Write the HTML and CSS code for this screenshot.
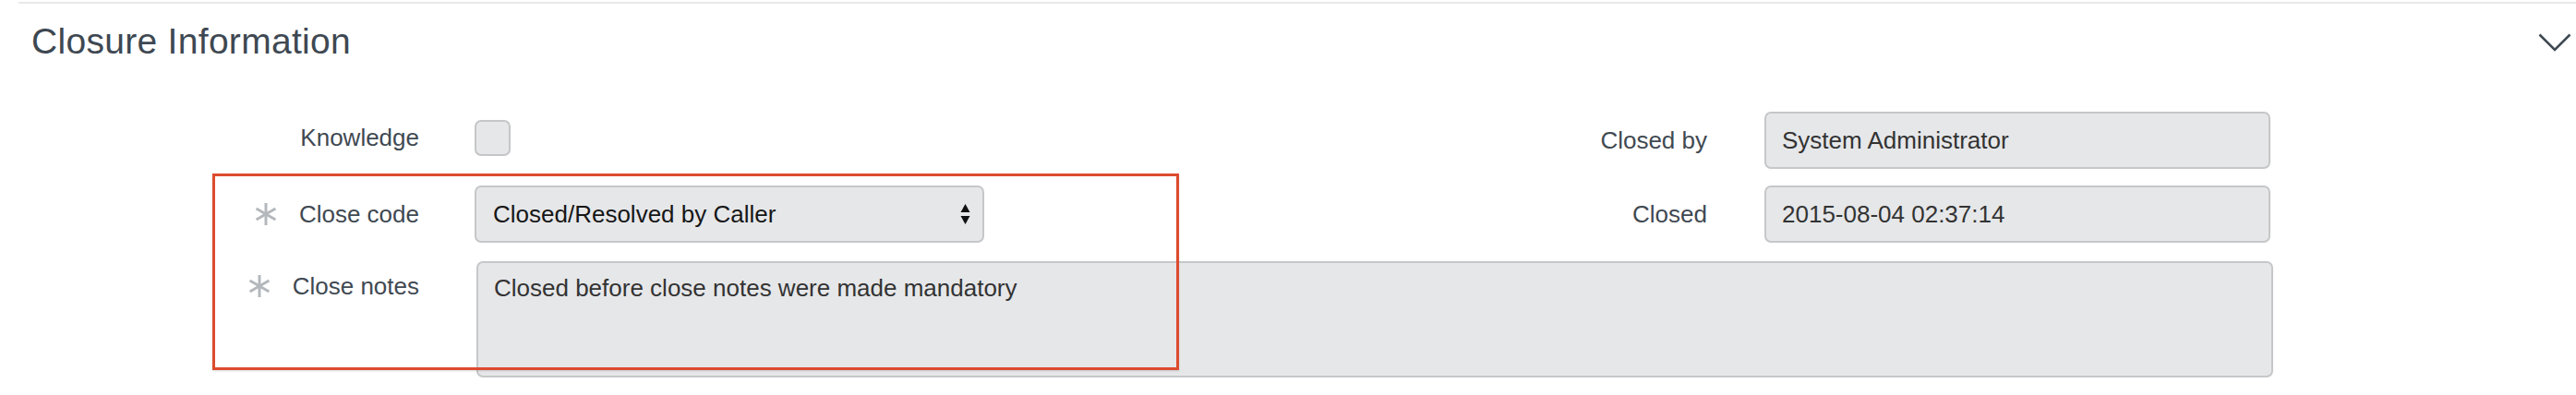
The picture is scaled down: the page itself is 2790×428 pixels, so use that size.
FILE: index.html
```html
<!DOCTYPE html>
<html lang="en">
<head>
<meta charset="utf-8">
<title>Closure Information</title>
<link rel="stylesheet" href="styles.css">
</head>
<body>
<div class="rule"></div>
<header class="section-head">
  <h2 class="section-title">Closure Information</h2>
  <svg class="chevron" width="36" height="20" viewBox="0 0 36 20" aria-hidden="true">
    <polyline points="1.5,1.5 18,18 34.5,1.5" fill="none" stroke="#3f4952" stroke-width="2.6" stroke-linejoin="miter"/>
  </svg>
</header>
<div class="form">
  <div class="form-grid">
    <label class="lbl lbl-knowledge">Knowledge</label>
    <div class="field"><span class="checkbox"></span></div>
    <label class="lbl lbl-right">Closed by</label>
    <div class="field"><div class="input">System Administrator</div></div>

    <label class="lbl"><svg class="req" width="26" height="26" viewBox="0 0 26 26" aria-hidden="true"><g stroke="#b4b8bc" stroke-width="3" stroke-linecap="butt"><line x1="13" y1="1" x2="13" y2="25"/><line x1="2.6" y1="7" x2="23.4" y2="19"/><line x1="2.6" y1="19" x2="23.4" y2="7"/></g></svg>Close code</label>
    <div class="field">
      <div class="select"><span class="select-text">Closed/Resolved by Caller</span>
        <svg class="updown" width="11" height="22" viewBox="0 0 11 22" aria-hidden="true"><polygon points="5.5,0 10.5,9 0.5,9" fill="#111"/><polygon points="0.5,13 10.5,13 5.5,22" fill="#111"/></svg>
      </div>
    </div>
    <label class="lbl lbl-right">Closed</label>
    <div class="field"><div class="input">2015-08-04 02:37:14</div></div>

    <label class="lbl lbl-top"><svg class="req" width="26" height="26" viewBox="0 0 26 26" aria-hidden="true"><g stroke="#b4b8bc" stroke-width="3" stroke-linecap="butt"><line x1="13" y1="1" x2="13" y2="25"/><line x1="2.6" y1="7" x2="23.4" y2="19"/><line x1="2.6" y1="19" x2="23.4" y2="7"/></g></svg>Close notes</label>
    <div class="textarea">Closed before close notes were made mandatory</div>
  </div>
  <div class="highlight"></div>
</div>
</body>
</html>
```

FILE: styles.css
```css
html, body {
  margin: 0;
  padding: 0;
  background: #ffffff;
}

body {
  font-family: "Liberation Sans", Arial, sans-serif;
  color: #3f4952;
  width: 2790px;
  overflow: hidden;
}

.rule {
  margin: 2px 0 0 20px;
  border-top: 2px solid #e8e9ea;
}

.section-head {
  display: flex;
  justify-content: space-between;
  align-items: center;
  padding: 16px 5px 0 34px;
}

.section-title {
  margin: 0;
  font-size: 39px;
  font-weight: normal;
  line-height: 50px;
  letter-spacing: 0.3px;
  color: #3e4852;
}

.chevron {
  display: block;
  margin-top: 2px;
}

.form {
  position: relative;
  margin-top: 51px;
}

.form-grid {
  display: grid;
  grid-template-columns: 454px 552px 725px 548px;
  grid-template-rows: 62px 62px 128px;
  column-gap: 60px;
  row-gap: 18px;
}

.lbl {
  font-size: 26px;
  line-height: 62px;
  text-align: right;
  color: #3f4952;
  white-space: nowrap;
}

.lbl-right {
  padding-right: 2px;
}

.lbl-knowledge {
  line-height: 56px;
}

.lbl-top {
  margin-top: 2px;
  line-height: 54px;
}

.req {
  display: inline-block;
  vertical-align: middle;
  margin: -4px 23px 0 0;
}

.field {
  display: flex;
  align-items: flex-start;
}

.checkbox {
  display: block;
  width: 39px;
  height: 39px;
  margin-top: 9px;
  box-sizing: border-box;
  border: 2px solid #c4c6c8;
  border-radius: 7px;
  background: #e6e7e9;
}

.input,
.select,
.textarea {
  box-sizing: border-box;
  border: 2px solid #c5c7c9;
  border-radius: 7px;
  background: #e6e7e9;
  font-size: 26px;
}

.input {
  width: 100%;
  height: 62px;
  line-height: 58px;
  padding: 0 17px;
  color: #333333;
}

.select {
  width: 100%;
  height: 62px;
  display: flex;
  align-items: center;
  justify-content: space-between;
  padding: 0 13px 0 18px;
  color: #161616;
}

.select-text {
  line-height: 58px;
}

.updown {
  display: block;
}

.textarea {
  grid-column: 2 / 5;
  margin: 2px -3px 0 2px;
  height: 126px;
  padding: 9px 17px;
  line-height: 36px;
  color: #333333;
}

.highlight {
  position: absolute;
  left: 230px;
  top: 67px;
  width: 1047px;
  height: 213px;
  box-sizing: border-box;
  border: 3px solid #dd4b2f;
  box-shadow: 0 1px 2px rgba(0, 0, 0, 0.15);
  pointer-events: none;
}
```
